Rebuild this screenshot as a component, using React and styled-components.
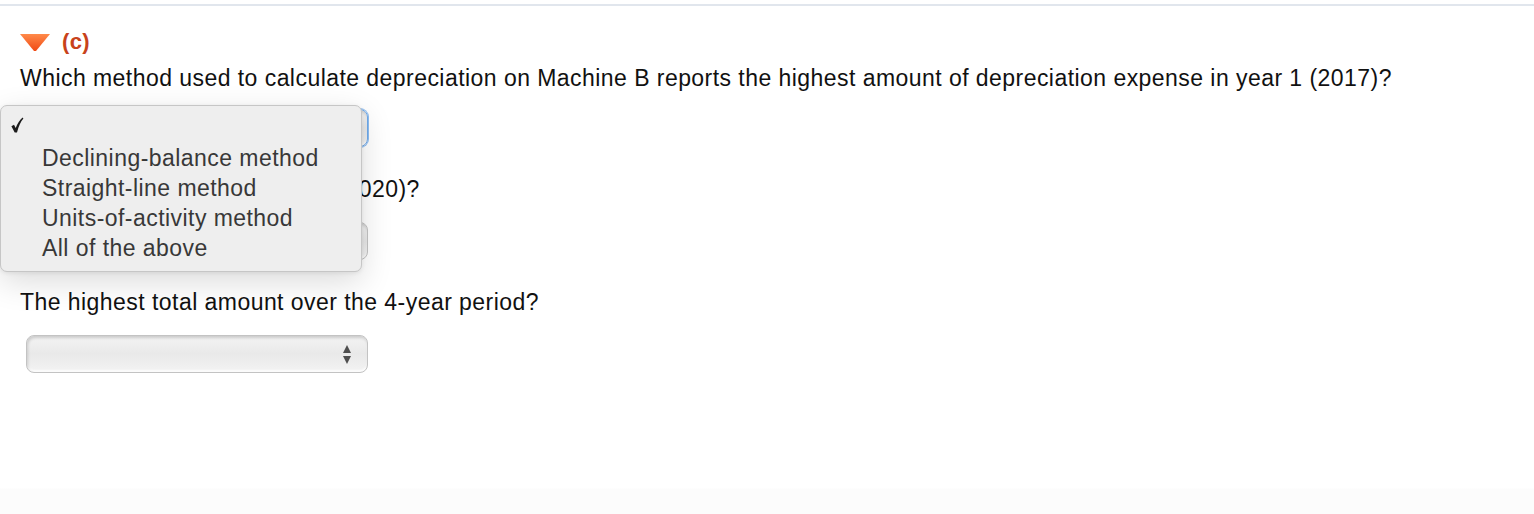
import React from 'react';
import styled, { createGlobalStyle } from 'styled-components';

const GlobalStyle = createGlobalStyle`
  body {
    margin: 0;
    background: #fff;
    font-family: 'Liberation Sans', Arial, Helvetica, sans-serif;
  }
`;

const Page = styled.div`
  position: relative;
  min-height: 514px;
  padding-top: 4px;
  box-sizing: border-box;
  background: linear-gradient(to bottom, #fff 0, #fff 488px, #fcfcfc 489px);
`;

const Rule = styled.div`
  height: 2px;
  background: #e1e6ed;
`;

const Part = styled.section`
  padding-left: 20px;
`;

const PartHeader = styled.div`
  display: flex;
  align-items: center;
  gap: 12px;
  height: 28px;
  margin-top: 22px;
`;

const PartLabel = styled.span`
  color: #c8421b;
  font-size: 22px;
  font-weight: bold;
  letter-spacing: 0.3px;
`;

const Question = styled.p`
  margin: ${(props) => (props.first ? '8px' : '28px')} 0 0;
  color: #111;
  font-size: 23px;
  line-height: 28px;
  letter-spacing: 0.45px;
  white-space: nowrap;
`;

const SelectBox = styled.div`
  width: 342px;
  height: 38px;
  margin: ${(props) => (props.first ? '17px' : '19px')} 0 0 6px;
  box-sizing: border-box;
  border: 1px solid ${(props) => (props.focused ? '#6ea9ea' : '#c3c3c3')};
  border-radius: 8px;
  background: linear-gradient(to bottom, #f3f3f3 0%, #e9e9e9 50%, #f3f3f3 100%);
  box-shadow: inset 1px 2px 3px rgba(0, 0, 0, 0.16), inset 0 -2px 2px rgba(255, 255, 255, 0.8)
    ${(props) => (props.focused ? ', 0 0 0 1px #8dbcf0' : '')};
  display: flex;
  align-items: center;
  justify-content: flex-end;
  padding-right: 16px;
`;

const Arrows = styled.div`
  display: flex;
  flex-direction: column;
  gap: 3px;
`;

const Arrow = styled.span`
  width: 0;
  height: 0;
  border-left: 4.5px solid transparent;
  border-right: 4.5px solid transparent;
  ${(props) => (props.down ? 'border-top: 8px solid #4e4e4e;' : 'border-bottom: 8px solid #4e4e4e;')}
`;

const Menu = styled.ul`
  position: absolute;
  left: 0;
  top: 105px;
  width: 362px;
  margin: 0;
  padding: 7px 0 8px;
  box-sizing: border-box;
  list-style: none;
  background: #eeeeee;
  border: 1px solid #c6c6c6;
  border-radius: 7px;
  box-shadow: 0 10px 32px rgba(0, 0, 0, 0.14), 0 1px 4px rgba(0, 0, 0, 0.08);
`;

const MenuItem = styled.li`
  display: flex;
  align-items: center;
  height: 30px;
  padding-left: 41px;
  color: #383838;
  font-size: 23px;
  letter-spacing: 0.45px;
  white-space: nowrap;
`;

const CheckMark = styled.svg`
  position: absolute;
  left: 10px;
  top: 11px;
`;

const Triangle = () => (
  <svg width='30' height='17' viewBox='0 0 30 17'>
    <defs>
      <linearGradient id='tri' x1='0' y1='0' x2='0' y2='1'>
        <stop offset='0' stopColor='#ff8a4a' />
        <stop offset='1' stopColor='#f04a14' />
      </linearGradient>
    </defs>
    <polygon points='0,0 30,0 16,17 14,17' fill='url(#tri)' />
  </svg>
);

const Select = ({ focused, first }) => (
  <SelectBox focused={focused} first={first}>
    <Arrows>
      <Arrow />
      <Arrow down />
    </Arrows>
  </SelectBox>
);

const options = ['Declining-balance method', 'Straight-line method', 'Units-of-activity method', 'All of the above'];

const App = () => {
  return (
    <Page>
      <GlobalStyle />
      <Rule />
      <Part>
        <PartHeader>
          <Triangle />
          <PartLabel>(c)</PartLabel>
        </PartHeader>
        <Question first>
          Which method used to calculate depreciation on Machine B reports the highest amount of depreciation expense in year 1 (2017)?
        </Question>
        <Select focused first />
        <Question>The highest amount in year 4 (2020)?</Question>
        <Select />
        <Question>The highest total amount over the 4-year period?</Question>
        <Select />
      </Part>
      <Menu>
        <MenuItem>
          <CheckMark width='13' height='16' viewBox='0 0 13 16'>
            <path
              d='M0.4 9.2 L3 7.8 L4.7 11 C6.5 6.4 8.7 3 11.6 0.4 L12.4 1.4 C9.8 4.6 7.6 8.8 6 15.6 L3.7 15.6 Z'
              fill='#1c1c1c'
            />
          </CheckMark>
        </MenuItem>
        {options.map((opt) => (
          <MenuItem key={opt}>{opt}</MenuItem>
        ))}
      </Menu>
    </Page>
  );
};

export default App;
